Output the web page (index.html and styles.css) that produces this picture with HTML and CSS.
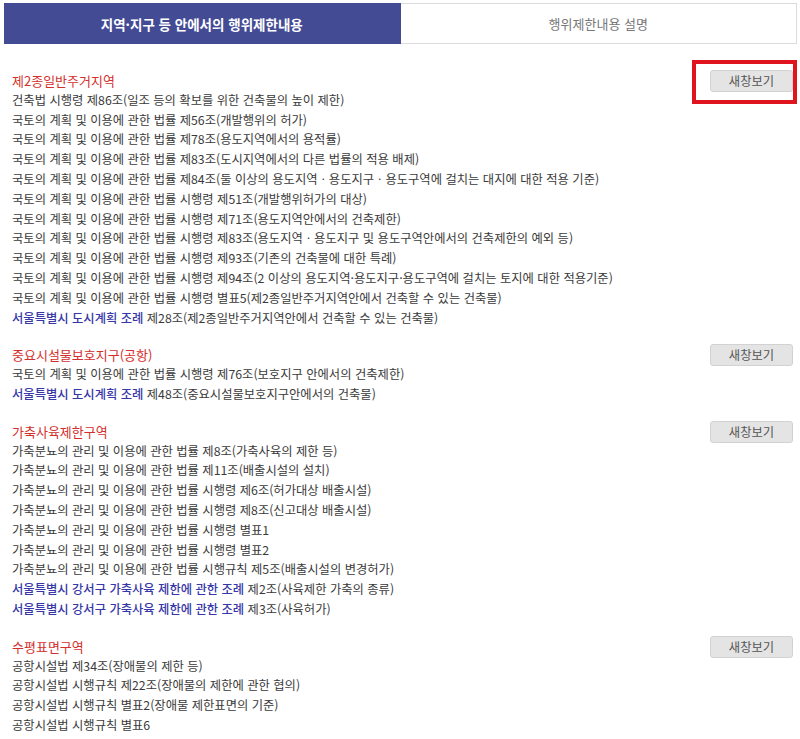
FILE: index.html
```html
<!DOCTYPE html>
<html lang="ko">
<head>
<meta charset="utf-8">
<link rel="stylesheet" href="styles.css">
</head>
<body>
<div class="tabs">
  <div class="tab active">지역·지구 등 안에서의 행위제한내용</div>
  <div class="tab">행위제한내용 설명</div>
</div>

<div class="content">
  <section class="zone">
    <div class="zone-head">
      <h3 class="zone-title">제2종일반주거지역</h3>
      <div class="btn-wrap highlight"><button class="btn">새창보기</button></div>
    </div>
    <ul class="laws">
      <li>건축법 시행령 제86조(일조 등의 확보를 위한 건축물의 높이 제한)</li>
      <li>국토의 계획 및 이용에 관한 법률 제56조(개발행위의 허가)</li>
      <li>국토의 계획 및 이용에 관한 법률 제78조(용도지역에서의 용적률)</li>
      <li>국토의 계획 및 이용에 관한 법률 제83조(도시지역에서의 다른 법률의 적용 배제)</li>
      <li>국토의 계획 및 이용에 관한 법률 제84조(둘 이상의 용도지역ㆍ용도지구ㆍ용도구역에 걸치는 대지에 대한 적용 기준)</li>
      <li>국토의 계획 및 이용에 관한 법률 시행령 제51조(개발행위허가의 대상)</li>
      <li>국토의 계획 및 이용에 관한 법률 시행령 제71조(용도지역안에서의 건축제한)</li>
      <li>국토의 계획 및 이용에 관한 법률 시행령 제83조(용도지역ㆍ용도지구 및 용도구역안에서의 건축제한의 예외 등)</li>
      <li>국토의 계획 및 이용에 관한 법률 시행령 제93조(기존의 건축물에 대한 특례)</li>
      <li>국토의 계획 및 이용에 관한 법률 시행령 제94조(2 이상의 용도지역·용도지구·용도구역에 걸치는 토지에 대한 적용기준)</li>
      <li>국토의 계획 및 이용에 관한 법률 시행령 별표5(제2종일반주거지역안에서 건축할 수 있는 건축물)</li>
      <li><span class="local">서울특별시 도시계획 조례</span> 제28조(제2종일반주거지역안에서 건축할 수 있는 건축물)</li>
    </ul>
  </section>

  <section class="zone">
    <div class="zone-head">
      <h3 class="zone-title">중요시설물보호지구(공항)</h3>
      <div class="btn-wrap"><button class="btn">새창보기</button></div>
    </div>
    <ul class="laws">
      <li>국토의 계획 및 이용에 관한 법률 시행령 제76조(보호지구 안에서의 건축제한)</li>
      <li><span class="local">서울특별시 도시계획 조례</span> 제48조(중요시설물보호지구안에서의 건축물)</li>
    </ul>
  </section>

  <section class="zone">
    <div class="zone-head">
      <h3 class="zone-title">가축사육제한구역</h3>
      <div class="btn-wrap"><button class="btn">새창보기</button></div>
    </div>
    <ul class="laws">
      <li>가축분뇨의 관리 및 이용에 관한 법률 제8조(가축사육의 제한 등)</li>
      <li>가축분뇨의 관리 및 이용에 관한 법률 제11조(배출시설의 설치)</li>
      <li>가축분뇨의 관리 및 이용에 관한 법률 시행령 제6조(허가대상 배출시설)</li>
      <li>가축분뇨의 관리 및 이용에 관한 법률 시행령 제8조(신고대상 배출시설)</li>
      <li>가축분뇨의 관리 및 이용에 관한 법률 시행령 별표1</li>
      <li>가축분뇨의 관리 및 이용에 관한 법률 시행령 별표2</li>
      <li>가축분뇨의 관리 및 이용에 관한 법률 시행규칙 제5조(배출시설의 변경허가)</li>
      <li><span class="local">서울특별시 강서구 가축사육 제한에 관한 조례</span> 제2조(사육제한 가축의 종류)</li>
      <li><span class="local">서울특별시 강서구 가축사육 제한에 관한 조례</span> 제3조(사육허가)</li>
    </ul>
  </section>

  <section class="zone">
    <div class="zone-head">
      <h3 class="zone-title">수평표면구역</h3>
      <div class="btn-wrap"><button class="btn">새창보기</button></div>
    </div>
    <ul class="laws">
      <li>공항시설법 제34조(장애물의 제한 등)</li>
      <li>공항시설법 시행규칙 제22조(장애물의 제한에 관한 협의)</li>
      <li>공항시설법 시행규칙 별표2(장애물 제한표면의 기준)</li>
      <li>공항시설법 시행규칙 별표6</li>
    </ul>
  </section>
</div>
</body>
</html>
```

FILE: styles.css
```css
* { box-sizing: border-box; }
html, body {
  margin: 0;
  padding: 0;
  background: #ffffff;
}
body {
  font-family: "Noto Sans CJK KR", "Noto Sans", sans-serif;
  color: #3a3a3a;
  font-size: 12.3px;
}

.tabs {
  display: flex;
  margin: 3px 3px 0 4px;
  height: 41px;
}
.tab {
  flex: 1;
  display: flex;
  align-items: center;
  justify-content: center;
  font-size: 13px;
  color: #777;
  border: 1px solid #dcdcdc;
  border-left: none;
  background: #fff;
}
.tab.active {
  background: #444b95;
  border-color: #444b95;
  color: #fff;
  font-size: 13.5px;
  font-weight: bold;
}

.content {
  padding: 27px 7px 0 12px;
}
.zone {
  margin-bottom: 17px;
}
.zone-head {
  display: flex;
  justify-content: space-between;
  align-items: center;
  height: 19.8px;
}
.zone-title {
  margin: 0;
  font-size: 13px;
  font-weight: normal;
  color: #d42f2c;
  line-height: 19.8px;
}
.btn-wrap {
  position: relative;
}
.btn {
  display: block;
  width: 83px;
  height: 22px;
  padding: 0;
  border: 1px solid #d2d2d2;
  border-radius: 3px;
  background: #e4e4e4;
  color: #555;
  font-family: inherit;
  font-size: 12.3px;
}
.highlight::after {
  content: "";
  position: absolute;
  left: -18px;
  top: -10px;
  right: -4px;
  bottom: -12px;
  border: 4px solid #e0141e;
}
.laws {
  list-style: none;
  margin: 0;
  padding: 0;
}
.laws li {
  line-height: 19.8px;
  white-space: nowrap;
}
.local {
  color: #3737a8;
  font-weight: 500;
}
```
